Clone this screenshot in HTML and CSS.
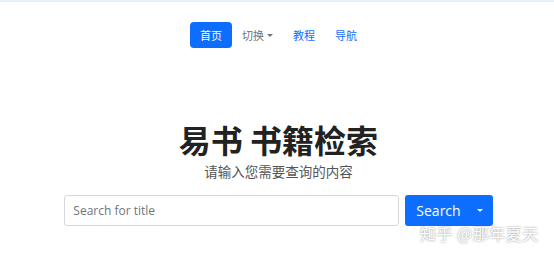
FILE: index.html
```html
<!DOCTYPE html>
<html lang="zh">
<head>
<meta charset="utf-8">
<title>易书 书籍检索</title>
<link rel="stylesheet" href="styles.css">
</head>
<body>
<div class="topline"></div>
<nav class="nav">
  <a class="pill active" href="#">首页</a>
  <a class="pill muted" href="#">切换<span class="caret"></span></a>
  <a class="pill" href="#">教程</a>
  <a class="pill" href="#">导航</a>
</nav>
<main class="hero">
  <h1 class="title">易书 书籍检索</h1>
  <p class="subtitle">请输入您需要查询的内容</p>
  <form class="search">
    <input class="field" type="text" placeholder="Search for title">
    <div class="btn-group">
      <button class="btn" type="button">Search</button>
      <button class="btn toggle" type="button"><span class="caret light"></span></button>
    </div>
  </form>
</main>
<div class="watermark">知乎 @那年夏天</div>
</body>
</html>
```
FILE: styles.css
```css
html, body {
  margin: 0;
  padding: 0;
  background: #fff;
  font-family: "Noto Sans CJK SC", "Open Sans", sans-serif;
  color: #212529;
}
body {
  position: relative;
  width: 554px;
  height: 253px;
  overflow: hidden;
}
.topline {
  height: 2px;
  background: #e3f1f8;
}
.nav {
  display: flex;
  justify-content: center;
  margin-top: 20px;
  padding-left: 3px;
}
.pill {
  display: flex;
  align-items: center;
  height: 26px;
  padding: 0 10px;
  font-size: 11px;
  color: #0d6efd;
  text-decoration: none;
  border-radius: 4px;
}
.pill.active {
  background: #0d6efd;
  color: #fff;
}
.pill.muted {
  color: #6c757d;
}
.caret {
  display: inline-block;
  width: 0;
  height: 0;
  margin-left: 3px;
  border-left: 3px solid transparent;
  border-right: 3px solid transparent;
  border-top: 3px solid #6c757d;
}
.caret.light {
  border-top-color: #fff;
  margin-left: 0;
}
.hero {
  display: flex;
  flex-direction: column;
  align-items: center;
  margin-top: 73px;
  padding-left: 3px;
}
.title {
  margin: 0;
  font-size: 32px;
  line-height: 36px;
  font-weight: 700;
  color: #222;
}
.subtitle {
  margin: 4px 0 0;
  font-size: 13.5px;
  line-height: 20px;
  color: #555;
}
.search {
  display: flex;
  gap: 6px;
  margin-top: 14px;
}
.field {
  box-sizing: border-box;
  width: 335px;
  height: 31px;
  padding: 0 8px;
  border: 1px solid #d5d9dd;
  border-radius: 3px;
  font-family: "Open Sans", sans-serif;
  font-size: 12px;
  color: #212529;
  outline: none;
}
.field::placeholder {
  color: #6c757d;
}
.btn-group {
  display: flex;
  height: 31px;
  background: #0d6efd;
  border-radius: 3px;
}
.btn {
  border: 0;
  background: transparent;
  color: #fff;
  font-family: "Open Sans", sans-serif;
  font-size: 14px;
  padding: 0 7px 0 11px;
  height: 31px;
  cursor: pointer;
}
.btn.toggle {
  display: flex;
  align-items: center;
  padding: 0 10px 0 9px;
}
.watermark {
  position: absolute;
  left: 420px;
  top: 221px;
  font-size: 16px;
  color: #fff;
  letter-spacing: 0.5px;
  text-shadow: 0 0 2px rgba(0,0,0,0.55);
  opacity: 0.9;
}
```
